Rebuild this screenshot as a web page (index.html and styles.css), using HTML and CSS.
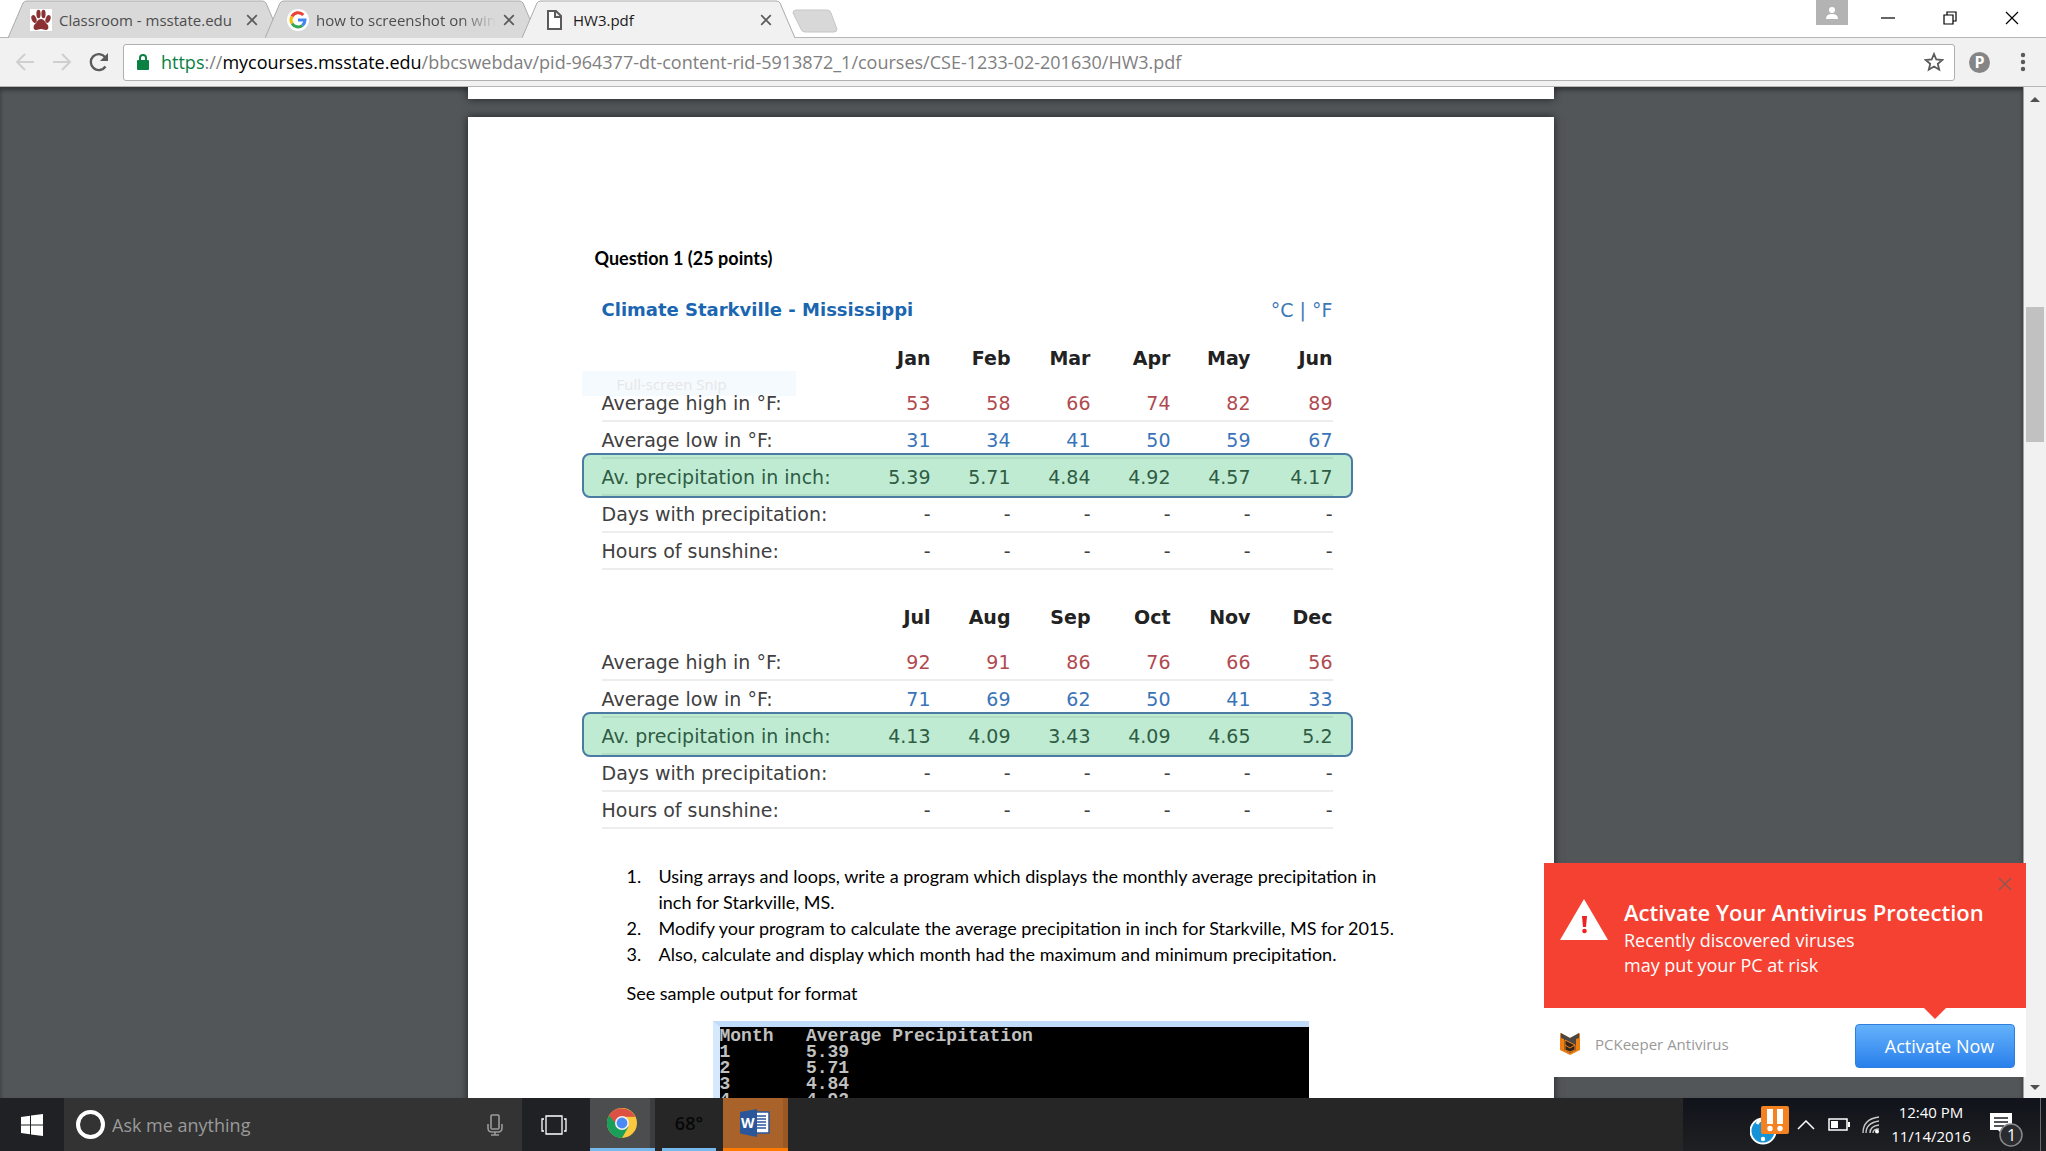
FILE: index.html
```html
<!DOCTYPE html>
<html lang="en">
<head>
    <meta charset="UTF-8">
    <meta name="viewport" content="width=device-width, initial-scale=1.0">
    <title>HW3.pdf</title>
    <link rel="stylesheet" href="styles.css">
</head>
<body>
    <header class="browser">
        <div class="tabstrip">
            <div class="tab">
                <svg class="tab-shape" viewBox="0 0 273 38" preserveAspectRatio="none"><path d="M0 38 L15 3 Q16 1 19 1 H254 Q257 1 258 3 L273 38"/></svg>
                <svg class="favicon" viewBox="0 0 22 22"><rect width="22" height="22" fill="#fff"/><g fill="#8b3033"><ellipse cx="4" cy="10" rx="2.4" ry="4" transform="rotate(-20 4 10)"/><ellipse cx="8.500" cy="5" rx="2.100" ry="4.200"/><ellipse cx="13.500" cy="5" rx="2.100" ry="4.200"/><ellipse cx="18" cy="10" rx="2.400" ry="4" transform="rotate(20 18 10)"/><path d="M11 10c3 0 4 3 6 5s2 6-1 6c-2 0-3-1-5-1s-3 1-5 1c-3 0-3-4-1-6s3-5 6-5z"/></g></svg>
                <span class="tab-title">Classroom - msstate.edu</span>
                <button class="tab-close" aria-label="Close tab"><svg viewBox="0 0 10 10"><path d="M1 1l8 8M9 1l-8 8"/></svg></button>
            </div>
            <div class="tab">
                <svg class="tab-shape" viewBox="0 0 273 38" preserveAspectRatio="none"><path d="M0 38 L15 3 Q16 1 19 1 H254 Q257 1 258 3 L273 38"/></svg>
                <svg class="favicon" viewBox="0 0 22 22"><circle cx="11" cy="11" r="11" fill="#fff"/><g fill="none" stroke-width="3"><path d="M16.300 6A7 7 0 0 0 5 7.500" stroke="#ea4335"/><path d="M5 7.500a7 7 0 0 0 0 7" stroke="#fbbc05"/><path d="M5 14.500a7 7 0 0 0 10.500 1.800" stroke="#34a853"/><path d="M15.500 16.300A7 7 0 0 0 18 11h-7" stroke="#4285f4"/></g></svg>
                <span class="tab-title faded">how to screenshot on windows</span>
                <button class="tab-close" aria-label="Close tab"><svg viewBox="0 0 10 10"><path d="M1 1l8 8M9 1l-8 8"/></svg></button>
            </div>
            <div class="tab active">
                <svg class="tab-shape" viewBox="0 0 273 38" preserveAspectRatio="none"><path d="M0 38 L15 3 Q16 1 19 1 H254 Q257 1 258 3 L273 38"/></svg>
                <svg class="favicon" viewBox="0 0 22 22"><path d="M4 2h8l5 5v13H4zM11 2v6h6" fill="#fff" stroke="#5a5a5a" stroke-width="2"/></svg>
                <span class="tab-title">HW3.pdf</span>
                <button class="tab-close" aria-label="Close tab"><svg viewBox="0 0 10 10"><path d="M1 1l8 8M9 1l-8 8"/></svg></button>
            </div>
            <button class="new-tab" aria-label="New tab"><svg viewBox="0 0 46 24"><path d="M4 1h31q3 0 4 3l6 16q0 3-3 3H13q-3 0-4-3L1 4q0-3 3-3z" fill="#d8d8d8" stroke="#c6c6c6"/></svg></button>
            <div class="window-controls">
                <button class="user" aria-label="User"><svg viewBox="0 0 12 12"><circle cx="6" cy="3" r="3" fill="#fff"/><path d="M0 12q0-5 6-5t6 5z" fill="#fff"/></svg></button>
                <button aria-label="Minimize"><svg viewBox="0 0 14 14"><path d="M0 7h14"/></svg></button>
                <button aria-label="Restore"><svg viewBox="0 0 14 14"><path d="M1 4h9v9H1zM4 4V1h9v9h-3"/></svg></button>
                <button aria-label="Close"><svg viewBox="0 0 14 14"><path d="M1 1l12 12M13 1L1 13"/></svg></button>
            </div>
        </div>
        <div class="toolbar">
            <button class="nav" aria-label="Back"><svg viewBox="0 0 20 20" stroke="#cfcfcf"><path d="M19 10H2M10 2l-8 8 8 8"/></svg></button>
            <button class="nav" aria-label="Forward"><svg viewBox="0 0 20 20" stroke="#cfcfcf"><path d="M1 10h17M10 2l8 8-8 8"/></svg></button>
            <button class="nav" aria-label="Reload"><svg viewBox="0 0 20 20" stroke="#5a5a5a"><path d="M16.500 14.500A8 8 0 1 1 16 5" stroke-width="2.400"/><path d="M19 1v8h-8z" fill="#5a5a5a" stroke="none"/></svg></button>
            <div class="omnibox">
                <svg class="lock" viewBox="0 0 12 16"><rect y="6" width="12" height="10" rx="1" fill="#0b8043"/><path d="M3 7V4a3 3 0 0 1 6 0v3" fill="none" stroke="#0b8043" stroke-width="2"/></svg>
                <div class="url" role="textbox" contenteditable="true" spellcheck="false" aria-label="Address"><span class="scheme">https</span>://<span class="host">mycourses.msstate.edu</span>/bbcswebdav/pid-964377-dt-content-rid-5913872_1/courses/CSE-1233-02-201630/HW3.pdf</div>
                <button class="star" aria-label="Bookmark"><svg viewBox="0 0 20 20"><path d="M10 2l2.300 5.500 6 .5-4.500 3.900 1.400 5.800L10 14.600l-5.200 3.100 1.400-5.800L1.700 8l6-.5z" fill="none" stroke="#5a5a5a" stroke-width="1.800"/></svg></button>
            </div>
            <button class="ext" aria-label="Pinterest">P</button>
            <button class="menu" aria-label="Menu"><svg viewBox="0 0 6 20"><g fill="#5a5a5a"><circle cx="3" cy="3" r="2.200"/><circle cx="3" cy="10" r="2.200"/><circle cx="3" cy="17" r="2.200"/></g></svg></button>
        </div>
    </header>

    <main class="viewer">
        <div class="pages">
            <div class="page previous"></div>
            <article class="page">
                <h1>Question 1 (25 points)</h1>
                <section class="climate">
                    <div class="climate-head">
                        <h2>Climate Starkville - Mississippi</h2>
                        <p class="units"><a href="#c">°C</a> | <a href="#f">°F</a></p>
                    </div>
                    <div class="snip">Full-screen Snip</div>
                    <table>
                        <thead><tr><th></th><th>Jan</th><th>Feb</th><th>Mar</th><th>Apr</th><th>May</th><th>Jun</th></tr></thead>
                        <tbody>
                            <tr class="high"><td>Average high in °F:</td><td>53</td><td>58</td><td>66</td><td>74</td><td>82</td><td>89</td></tr>
                            <tr class="low"><td>Average low in °F:</td><td>31</td><td>34</td><td>41</td><td>50</td><td>59</td><td>67</td></tr>
                            <tr class="precip"><td>Av. precipitation in inch:</td><td>5.39</td><td>5.71</td><td>4.84</td><td>4.92</td><td>4.57</td><td>4.17</td></tr>
                            <tr><td>Days with precipitation:</td><td>-</td><td>-</td><td>-</td><td>-</td><td>-</td><td>-</td></tr>
                            <tr><td>Hours of sunshine:</td><td>-</td><td>-</td><td>-</td><td>-</td><td>-</td><td>-</td></tr>
                        </tbody>
                    </table>
                    <table>
                        <thead><tr><th></th><th>Jul</th><th>Aug</th><th>Sep</th><th>Oct</th><th>Nov</th><th>Dec</th></tr></thead>
                        <tbody>
                            <tr class="high"><td>Average high in °F:</td><td>92</td><td>91</td><td>86</td><td>76</td><td>66</td><td>56</td></tr>
                            <tr class="low"><td>Average low in °F:</td><td>71</td><td>69</td><td>62</td><td>50</td><td>41</td><td>33</td></tr>
                            <tr class="precip"><td>Av. precipitation in inch:</td><td>4.13</td><td>4.09</td><td>3.43</td><td>4.09</td><td>4.65</td><td>5.2</td></tr>
                            <tr><td>Days with precipitation:</td><td>-</td><td>-</td><td>-</td><td>-</td><td>-</td><td>-</td></tr>
                            <tr><td>Hours of sunshine:</td><td>-</td><td>-</td><td>-</td><td>-</td><td>-</td><td>-</td></tr>
                        </tbody>
                    </table>
                </section>
                <ol class="tasks">
                    <li>Using arrays and loops, write a program which displays the monthly average precipitation in<br>inch for Starkville, MS.</li>
                    <li>Modify your program to calculate the average precipitation in inch for Starkville, MS for 2015.</li>
                    <li>Also, calculate and display which month had the maximum and minimum precipitation.</li>
                </ol>
                <p class="note">See sample output for format</p>
<pre class="console">Month   Average Precipitation
1       5.39
2       5.71
3       4.84
4       4.92</pre>
            </article>
        </div>
        <div class="scrollbar">
            <svg class="arrow" viewBox="0 0 10 5"><path d="M0 5l5-5 5 5z"/></svg>
            <div class="track"><div class="thumb"></div></div>
            <svg class="arrow" viewBox="0 0 10 5"><path d="M0 0h10L5 5z"/></svg>
        </div>

        <aside class="popup">
            <div class="popup-alert">
                <svg class="warning" viewBox="0 0 48 42"><path d="M24 0l24 41H0z" fill="#fff"/><path d="M22 17h5l-1 11h-3z" fill="#e22"/><circle cx="24.500" cy="32" r="2.300" fill="#e22"/></svg>
                <div>
                    <h3>Activate Your Antivirus Protection</h3>
                    <p>Recently discovered viruses<br>may put your PC at risk</p>
                </div>
                <button class="popup-close" aria-label="Close"><svg viewBox="0 0 14 14"><path d="M1 1l12 12M13 1L1 13"/></svg></button>
            </div>
            <div class="popup-foot">
                <svg class="shield" viewBox="0 0 20 22"><path d="M0 0l10 5 10-5v17l-10 5-10-5z" fill="#f07f13"/><path d="M1 0l9 5 9-5v5l-3 1v11l-6 3-6-3V6L1 5z" fill="#4a4643"/><path d="M5 7l10 5v5l-5 2-5-2z" fill="#33251c" stroke="#f07f13"/><path d="M5 12l5 3 5-3" fill="none" stroke="#f07f13"/></svg>
                <span>PCKeeper Antivirus</span>
                <button class="activate">Activate Now</button>
            </div>
        </aside>
    </main>

    <footer class="taskbar">
        <button class="start" aria-label="Start"><svg viewBox="0 0 22 22"><path d="M0 3l9-1.300V10.500H0zM10 1.600L22 0v10.500H10zM0 11.500h9v8.800L0 19zM10 11.500h12V22l-12-1.600z" fill="#fff"/></svg></button>
        <div class="search">
            <span class="cortana"></span>
            <input type="text" placeholder="Ask me anything" aria-label="Search">
            <svg class="mic" viewBox="0 0 16 22"><g fill="none" stroke="#9a9a9a" stroke-width="1.600"><rect x="4" y="1" width="8" height="14" rx="1"/><path d="M1 10v4q0 4 4 4h6q4 0 4-4v-4M8 18v3M4 21h8"/></g></svg>
        </div>
        <button class="task-view" aria-label="Task view"><svg viewBox="0 0 26 20"><path d="M5 1h16v18H5zM3 4H1v12h2M23 4h2v12h-2" fill="none" stroke="#fff" stroke-width="1.300"/></svg></button>
        <button class="app chrome" aria-label="Chrome"><svg viewBox="0 0 30 30"><circle cx="15" cy="15" r="15" fill="#fbc93d"/><path d="M15 15L2 7.500A15 15 0 0 0 15 30l6.500-11.200z" fill="#1a9f5b"/><path d="M15 15h-6.500L2 7.500a15 15 0 0 1 26 .8H15z" fill="#dd5144"/><path d="M15 8.300h13" stroke="#dd5144"/><circle cx="15" cy="15" r="7" fill="#f1f1f1"/><circle cx="15" cy="15" r="5.400" fill="#4a8af4"/></svg></button>
        <button class="app weather">68°</button>
        <button class="app word" aria-label="Word"><svg viewBox="0 0 30 30"><path d="M15 4h14v21H15z" fill="#fff" stroke="#2b579a" stroke-width="1.500"/><path d="M17 8h9M17 11h9M17 14h9M17 17h9M17 20h9" stroke="#2b579a" stroke-width="1.500"/><path d="M0 4l17-3v28L0 25.500z" fill="#2b579a"/><text x="1" y="20" fill="#fff">W</text></svg></button>
        <div class="tray">
            <svg class="alert-icon" viewBox="0 0 40 40"><circle cx="13" cy="26" r="12.500" fill="#1593d6" stroke="#fff" stroke-width="2"/><path d="M7 19q2-4 5-4" fill="none" stroke="#fff" stroke-width="3"/><circle cx="13" cy="34" r="2.200" fill="#fff"/><rect x="11" y="1" width="28" height="28" rx="2" fill="#f58220"/><path d="M17 4h6v15h-6zM27 4h6v15h-6z" fill="#fff"/><circle cx="20" cy="23.500" r="2.700" fill="#fff"/><circle cx="30" cy="23.500" r="2.700" fill="#fff"/></svg>
            <svg class="chevron" viewBox="0 0 18 10"><path d="M1 9l8-8 8 8" fill="none" stroke="#fff" stroke-width="1.500"/></svg>
            <svg class="battery" viewBox="0 0 22 13"><path d="M1 1h18v11H1z" fill="none" stroke="#fff" stroke-width="1.500"/><path d="M3 3h7v7H3zM20 4h2v5h-2z" fill="#fff"/></svg>
            <svg class="wifi" viewBox="0 0 18 18"><g fill="none" stroke="#c8c8c8" stroke-width="1.400"><path d="M1 17Q1 3 17 1"/><path d="M4 17Q4 7 17 5"/><path d="M8 17Q8 10 17 9"/><path d="M11 17q0-4 6-4"/></g><circle cx="15" cy="15.500" r="2" fill="#fff"/></svg>
            <div class="clock">12:40 PM<br>11/14/2016</div>
            <button class="notices" aria-label="Notifications"><svg viewBox="0 0 34 34"><path d="M0 0h22v17h-9v5l-5-5H0z" fill="#fff"/><path d="M4 5h14M4 9h14M4 13h10" stroke="#1b1d20" stroke-width="1.500"/><circle cx="21" cy="22" r="11" fill="#2b2c2f" stroke="#888" stroke-width="1.500"/><text x="17" y="28" fill="#fff">1</text></svg></button>
            <button class="show-desktop" aria-label="Show desktop"></button>
        </div>
    </footer>
</body>
</html>
```
FILE: styles.css
```css
*, *::before, *::after {
    box-sizing: border-box;
}
body {
    margin: 0;
    height: 100vh;
    display: flex;
    flex-direction: column;
    overflow: hidden;
    font-family: "Open Sans", "Noto Sans", sans-serif;
}
button {
    display: flex;
    align-items: center;
    justify-content: center;
    padding: 0;
    border: 0;
    background: none;
    font-family: inherit;
}
h1, h2, h3, p, pre, ol {
    margin: 0;
    padding: 0;
}

/* browser chrome */
.tabstrip {
    height: 38px;
    display: flex;
    padding-left: 8px;
    background: #fff;
    border-bottom: 1px solid #b6b6b6;
}
.tab {
    position: relative;
    width: 273px;
    height: 38px;
    margin-right: -16px;
    padding: 2px 23px 0 22px;
    display: flex;
    align-items: center;
    gap: 7px;
    font-size: 15px;
    color: #4d4d4d;
}
.tab.active {
    z-index: 1;
    color: #1a1a1a;
}
.tab-shape {
    position: absolute;
    top: 0;
    left: 0;
    width: 100%;
    height: 100%;
    fill: #d9d9d9;
    stroke: #ababab;
}
.tab.active .tab-shape {
    fill: #f1f1f1;
}
.favicon {
    position: relative;
    width: 22px;
    height: 22px;
}
.tab-title {
    position: relative;
    flex: 1;
    overflow: hidden;
    white-space: nowrap;
}
.tab-title.faded {
    -webkit-mask-image: linear-gradient(to right, #000 80%, transparent);
    mask-image: linear-gradient(to right, #000 80%, transparent);
}
.tab-close {
    position: relative;
    width: 12px;
}
.tab-close svg {
    width: 12px;
    stroke: #5a5a5a;
    stroke-width: 1.4;
}
.new-tab {
    margin-left: 13px;
    height: 41px;
}
.new-tab svg {
    width: 46px;
}
.window-controls {
    display: flex;
    margin-left: auto;
    margin-right: 3px;
}
.window-controls button {
    width: 62px;
    height: 36px;
}
.window-controls svg {
    width: 14px;
    fill: none;
    stroke: #000;
    stroke-width: 1.2;
}
.window-controls .user {
    width: 32px;
    height: 25px;
    margin-right: 9px;
    background: #b3b3b3;
}
.window-controls .user svg {
    width: 12px;
    stroke: none;
}
.toolbar {
    height: 49px;
    display: flex;
    align-items: center;
    padding: 0 20px 0 6px;
    background: #f1f1f1;
    border-bottom: 1px solid #b6b6b6;
}
.nav {
    width: 37px;
}
.nav svg {
    width: 20px;
    fill: none;
    stroke-width: 2;
}
.omnibox {
    flex: 1;
    height: 37px;
    margin-left: 6px;
    padding: 0 10px 0 13px;
    display: flex;
    align-items: center;
    background: #fff;
    border: 1px solid #b0b0b0;
    border-radius: 3px;
}
.lock {
    width: 12px;
    margin-right: 12px;
}
.url {
    flex: 1;
    font-size: 18px;
    line-height: 26px;
    color: #808080;
    white-space: nowrap;
}
.scheme {
    color: #0b8043;
}
.host {
    color: #000;
}
.star svg {
    width: 20px;
}
.ext {
    width: 21px;
    height: 21px;
    margin-left: 14px;
    border-radius: 50%;
    background: #858585;
    color: #fff;
    font-size: 16px;
    font-weight: bold;
}
.menu {
    margin-left: 30px;
}
.menu svg {
    width: 6px;
}

/* pdf viewer */
.viewer {
    position: relative;
    flex: 1;
    min-height: 0;
    display: flex;
    background: #525659;
}
.pages {
    flex: 1;
    overflow: hidden;
    padding-right: 2px;
    border-right: 1px solid #a0a0a0;
    box-shadow: inset 0 3px 4px rgba(0, 0, 0, 0.4);
}
.page {
    width: 1086px;
    max-width: 100%;
    margin: 0 auto;
    padding: 128px 127px;
    background: #fff;
    box-shadow: 0 0 8px rgba(0, 0, 0, 0.6);
    font-family: Lato, "Open Sans", sans-serif;
    font-size: 18px;
    line-height: 26px;
    color: #000;
}
.page.previous {
    height: 12px;
    padding: 0;
    margin-bottom: 18px;
}
h1 {
    font-size: 18px;
    line-height: 26px;
}
.climate {
    position: relative;
    z-index: 0;
    width: 731px;
    margin: 26px 0 34px 7px;
    font-family: "DejaVu Sans", sans-serif;
    font-size: 19px;
    color: #404040;
}
.climate-head {
    display: flex;
    justify-content: space-between;
    margin-bottom: 16px;
}
h2 {
    font-size: 18px;
    color: #1a66b0;
}
.units, .units a {
    color: #3c78b8;
    text-decoration: none;
}
.snip {
    position: absolute;
    z-index: -1;
    top: 74px;
    left: -20px;
    width: 214px;
    height: 25px;
    padding-left: 35px;
    background: #f5faff;
    font-family: "Open Sans", sans-serif;
    font-size: 15px;
    color: #e6e6e6;
}
table {
    width: 100%;
    table-layout: fixed;
    border-collapse: separate;
    border-spacing: 0;
}
table + table {
    margin-top: 28px;
}
th, td {
    width: 80px;
    padding: 0;
    text-align: right;
}
th:first-child, td:first-child {
    width: auto;
    text-align: left;
    white-space: nowrap;
}
th:last-child, td:last-child {
    width: 82px;
}
th {
    height: 46px;
    line-height: 38px;
    vertical-align: top;
    color: #222;
}
td {
    height: 37px;
    border-bottom: 2px solid #ededed;
}
.high td + td {
    color: #b04a50;
}
.low td + td {
    color: #3a74b8;
}
.precip {
    position: relative;
}
.precip td:first-child::after {
    content: "";
    position: absolute;
    top: -6px;
    left: -20px;
    right: -20px;
    height: 45px;
    background: rgba(0, 174, 79, 0.25);
    border: 2px solid #4a7ba3;
    border-radius: 8px;
}
.tasks {
    margin-left: 32px;
    padding-left: 32px;
    list-style: none;
    counter-reset: task;
    white-space: nowrap;
}
.tasks li {
    counter-increment: task;
}
.tasks li::before {
    content: counter(task) ".";
    float: left;
    margin-left: -32px;
}
.note {
    margin: 13px 0 15px 32px;
}
.console {
    width: 596px;
    margin-left: 118px;
    border-top: 6px solid #c0dcfa;
    border-left: 7px solid #d6e8fc;
    padding-top: 1px;
    background: #000;
    color: #c0c0c0;
    font-family: "Liberation Mono", monospace;
    font-size: 18px;
    font-weight: bold;
    line-height: 16px;
}
.scrollbar {
    width: 22px;
    display: flex;
    flex-direction: column;
    align-items: center;
    padding: 10px 0 8px;
    background: #f1f1f1;
}
.arrow {
    width: 10px;
    fill: #505050;
}
.track {
    flex: 1;
    padding-top: 205px;
}
.thumb {
    width: 18px;
    height: 135px;
    background: #c1c1c1;
}

/* antivirus notice */
.popup {
    position: absolute;
    right: 20px;
    bottom: 21px;
    width: 482px;
    background: #fff;
}
.popup-alert {
    position: relative;
    height: 145px;
    display: flex;
    gap: 16px;
    padding: 33px 16px;
    background: #f44132;
    color: #fff;
    white-space: nowrap;
}
.popup-alert::after {
    content: "";
    position: absolute;
    right: 80px;
    bottom: -11px;
    border: 11px solid transparent;
    border-top-color: #f44132;
    border-bottom: 0;
}
.warning {
    width: 48px;
    height: 42px;
    margin-top: 3px;
}
.popup h3 {
    font-size: 22px;
    line-height: 32px;
    font-weight: 600;
}
.popup p {
    font-size: 18px;
    line-height: 25px;
}
.popup-close {
    position: absolute;
    top: 14px;
    right: 14px;
}
.popup-close svg {
    width: 14px;
    stroke: #8a5a50;
    stroke-width: 1.5;
}
.popup-foot {
    display: flex;
    align-items: center;
    padding: 16px 11px 9px 16px;
    font-size: 15px;
    line-height: 20px;
    color: #999;
}
.popup-foot span {
    padding-bottom: 4px;
}
.shield {
    width: 20px;
    margin-right: 15px;
    margin-bottom: 4px;
}
.activate {
    width: 160px;
    height: 44px;
    margin-left: auto;
    padding-left: 9px;
    border: 1px solid #2f7fe0;
    border-radius: 4px;
    background: linear-gradient(#64b2fb, #2a80ec);
    color: #fff;
    font-size: 18px;
}

/* taskbar */
.taskbar {
    height: 53px;
    display: flex;
    background: #262626;
    color: #fff;
}
.start {
    width: 64px;
    background: #1f2124;
}
.start svg {
    width: 22px;
}
.search {
    width: 458px;
    display: flex;
    align-items: center;
    padding: 0 19px 0 12px;
    background: #333;
}
.cortana {
    width: 29px;
    height: 29px;
    border: 4px solid #fff;
    border-radius: 50%;
}
.search input {
    flex: 1;
    margin-left: 7px;
    padding: 0;
    border: 0;
    background: none;
    font-family: inherit;
    font-size: 18px;
}
.search input::placeholder {
    color: #9a9a9a;
}
.mic {
    width: 16px;
}
.task-view {
    width: 68px;
    padding-right: 4px;
    background: #1f2124;
}
.task-view svg {
    width: 26px;
}
.app {
    width: 65px;
    padding-right: 2px;
    border-bottom: 3px solid #76b9ed;
}
.app svg {
    width: 30px;
}
.chrome {
    background: linear-gradient(to right, #4c4d4f 60px, #3c3d3f 60px);
}
.weather {
    width: 54px;
    margin: 0 7px;
    padding-right: 0;
    color: #080808;
    font-size: 18px;
    font-weight: 600;
}
.word {
    background: linear-gradient(to right, #a9622a 60px, #9a5825 60px);
    border-color: #ff7a00;
}
.word text {
    font-size: 14px;
    font-weight: bold;
}
.tray {
    margin-left: auto;
    width: 363px;
    display: flex;
    align-items: center;
    padding-left: 67px;
    background: linear-gradient(#10131b, #1f2022);
}
.alert-icon {
    width: 40px;
}
.chevron {
    width: 18px;
    margin-left: 7px;
}
.battery {
    width: 22px;
    margin-left: 13px;
}
.wifi {
    width: 18px;
    margin-left: 12px;
}
.clock {
    width: 84px;
    margin-left: 9px;
    padding-bottom: 2px;
    font-size: 15px;
    line-height: 24px;
    text-align: center;
}
.notices {
    margin-left: 17px;
}
.notices svg {
    width: 34px;
    margin-top: 10px;
}
.notices text {
    font-size: 16px;
}
.show-desktop {
    width: 6px;
    height: 53px;
    margin-left: auto;
    border-left: 1px solid #6a6a6a;
}
```
